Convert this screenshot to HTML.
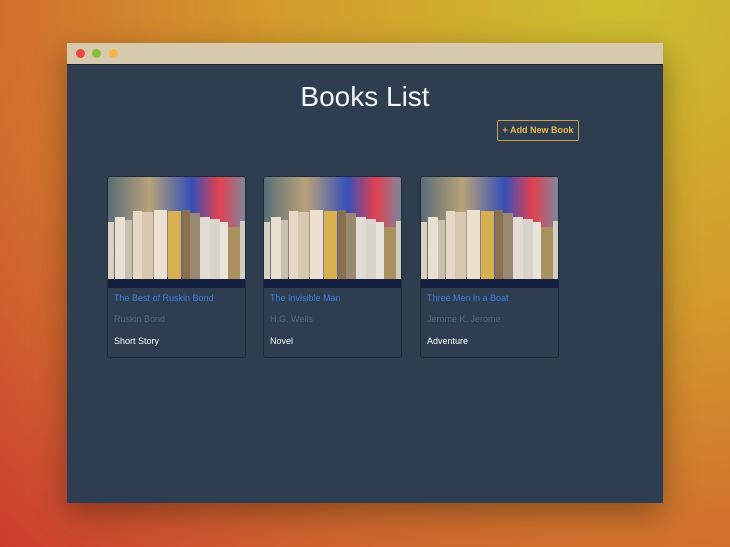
<!DOCTYPE html>
<html><head><style>
*{margin:0;padding:0;box-sizing:border-box}
body{width:730px;height:547px;overflow:hidden;position:relative;font-family:"Liberation Sans",sans-serif;
background:radial-gradient(ellipse at 85% 0%,#cdbf2f 0%,#d39a2c 40%,#d2702e 70%,#cc3d2f 100%);}
.win{position:absolute;left:67px;top:43px;width:596px;height:460px;background:#2e3d50;box-shadow:0 10px 30px rgba(0,0,0,.35);}
.bar{height:22px;background:#d6c9ad;border-bottom:1px solid #1a2430;position:relative}
.dot{position:absolute;top:6px;width:9px;height:9px;border-radius:50%}
h1{position:absolute;left:0;width:596px;top:38px;text-align:center;font-weight:normal;font-size:28px;color:#f4f6f8;letter-spacing:0}
.btn{position:absolute;left:430px;top:77px;width:82px;height:21px;border:1px solid #c9a24a;border-radius:2px;color:#e9b94f;font-size:9px;font-weight:bold;text-align:center;line-height:19px}
.card{position:absolute;top:133px;width:139px;height:182px;border:1px solid #1f2a38;border-radius:3px;background:#2e3d50;overflow:hidden}
.card svg{display:block}
.t{position:absolute;left:6px;top:116px;font-size:9px;color:#3d7fe0}
.a{position:absolute;left:6px;top:137px;font-size:9px;color:#5a6878}
.g{position:absolute;left:6px;top:159px;font-size:9px;color:#fff}
</style></head><body>
<div class="win">
<div class="bar"><div class="dot" style="left:9px;background:#f0443f"></div><div class="dot" style="left:25px;background:#8cbc36"></div><div class="dot" style="left:42px;background:#f5b54a"></div></div>
<h1>Books List</h1>
<div class="btn">+ Add New Book</div>

<div class="card" style="left:40px">
<svg width="139" height="111" viewBox="0 0 139 111"><defs><linearGradient id="bg" x1="0" x2="1"><stop offset="0" stop-color="#5b6e77"/><stop offset=".3" stop-color="#b8a27a"/><stop offset=".6" stop-color="#3550b8"/><stop offset=".8" stop-color="#e24050"/><stop offset="1" stop-color="#7a8aa0"/></linearGradient></defs>
<rect width="139" height="111" fill="url(#bg)"/><rect y="100" width="139" height="11" fill="#152040"/>
<rect x="0" y="45" width="6" height="57" fill="#d8d0c0"/><rect x="7" y="40" width="10" height="62" fill="#e8e0d0"/><rect x="17" y="43" width="7" height="59" fill="#c8c0b0"/><rect x="25" y="34" width="9" height="68" fill="#e6d7c6"/><rect x="34" y="35" width="11" height="67" fill="#d8c8b0"/><rect x="46" y="33" width="13" height="69" fill="#ece0d0"/><rect x="60" y="34" width="13" height="68" fill="#d8b050"/><rect x="74" y="33" width="8" height="69" fill="#8a7050"/><rect x="82" y="36" width="10" height="66" fill="#9a8870"/><rect x="92" y="40" width="10" height="62" fill="#e0dcd4"/><rect x="102" y="42" width="10" height="60" fill="#d8d4cc"/><rect x="112" y="45" width="8" height="57" fill="#e8e4dc"/><rect x="120" y="50" width="12" height="52" fill="#a89060"/><rect x="132" y="44" width="7" height="58" fill="#d0ccc0"/></svg>
<div class="t">The Best of Ruskin Bond</div><div class="a">Ruskin Bond</div><div class="g">Short Story</div></div>

<div class="card" style="left:196px">
<svg width="139" height="111" viewBox="0 0 139 111"><rect width="139" height="111" fill="url(#bg)"/><rect y="100" width="139" height="11" fill="#152040"/>
<rect x="0" y="45" width="6" height="57" fill="#d8d0c0"/><rect x="7" y="40" width="10" height="62" fill="#e8e0d0"/><rect x="17" y="43" width="7" height="59" fill="#c8c0b0"/><rect x="25" y="34" width="9" height="68" fill="#e6d7c6"/><rect x="34" y="35" width="11" height="67" fill="#d8c8b0"/><rect x="46" y="33" width="13" height="69" fill="#ece0d0"/><rect x="60" y="34" width="13" height="68" fill="#d8b050"/><rect x="74" y="33" width="8" height="69" fill="#8a7050"/><rect x="82" y="36" width="10" height="66" fill="#9a8870"/><rect x="92" y="40" width="10" height="62" fill="#e0dcd4"/><rect x="102" y="42" width="10" height="60" fill="#d8d4cc"/><rect x="112" y="45" width="8" height="57" fill="#e8e4dc"/><rect x="120" y="50" width="12" height="52" fill="#a89060"/><rect x="132" y="44" width="7" height="58" fill="#d0ccc0"/></svg>
<div class="t">The Invisible Man</div><div class="a">H.G. Wells</div><div class="g">Novel</div></div>

<div class="card" style="left:353px">
<svg width="139" height="111" viewBox="0 0 139 111"><rect width="139" height="111" fill="url(#bg)"/><rect y="100" width="139" height="11" fill="#152040"/>
<rect x="0" y="45" width="6" height="57" fill="#d8d0c0"/><rect x="7" y="40" width="10" height="62" fill="#e8e0d0"/><rect x="17" y="43" width="7" height="59" fill="#c8c0b0"/><rect x="25" y="34" width="9" height="68" fill="#e6d7c6"/><rect x="34" y="35" width="11" height="67" fill="#d8c8b0"/><rect x="46" y="33" width="13" height="69" fill="#ece0d0"/><rect x="60" y="34" width="13" height="68" fill="#d8b050"/><rect x="74" y="33" width="8" height="69" fill="#8a7050"/><rect x="82" y="36" width="10" height="66" fill="#9a8870"/><rect x="92" y="40" width="10" height="62" fill="#e0dcd4"/><rect x="102" y="42" width="10" height="60" fill="#d8d4cc"/><rect x="112" y="45" width="8" height="57" fill="#e8e4dc"/><rect x="120" y="50" width="12" height="52" fill="#a89060"/><rect x="132" y="44" width="7" height="58" fill="#d0ccc0"/></svg>
<div class="t">Three Men in a Boat</div><div class="a">Jerome K. Jerome</div><div class="g">Adventure</div></div>
</div>
</body></html>
